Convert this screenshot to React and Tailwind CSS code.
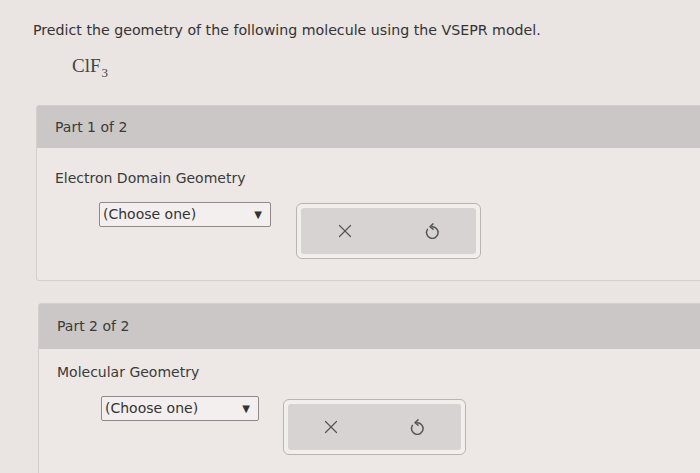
import { X } from "lucide-react";

function UndoIcon() {
  return (
    <svg width="17" height="19" viewBox="0 0 16 18" fill="none" stroke="#555" strokeWidth="1.4" strokeLinecap="round" strokeLinejoin="round">
      <path d="M7.5 4.5 A5.5 5.5 0 1 1 3.2 7" />
      <path d="M8.5 1.8 L5.6 4.5 L8.5 6.8" />
    </svg>
  );
}

function ChooseSelect({ width }) {
  return (
    <div
      className="h-[25px] border border-[#8f8a89] rounded-[2px] bg-[#f3efee] flex items-center justify-between pl-[3px] pr-[8px]"
      style={{ width }}
    >
      <span className="text-[14px] text-[#333]">(Choose one)</span>
      <span className="text-[10px] text-[#333]">▼</span>
    </div>
  );
}

function ButtonGroup({ width }) {
  return (
    <div
      className="h-[56px] border-[1.5px] border-[#b9b4b3] rounded-[6px] bg-[#f2eeec] p-[4px]"
      style={{ width }}
    >
      <div className="h-full rounded-[3px] bg-[#d7d3d2] grid grid-cols-2 items-center">
        <div className="flex justify-center">
          <X size={22} strokeWidth={1.3} color="#555" />
        </div>
        <div className="flex justify-center">
          <UndoIcon />
        </div>
      </div>
    </div>
  );
}

function Part({ title, label, headerH, bodyH, bodyPt, selW, btnW, selGap, btnMt, ml }) {
  return (
    <div className="border border-[#d4cfcd] rounded-[3px] bg-[#ede8e6] w-[700px]" style={{ marginLeft: ml }}>
      <div className="bg-[#cbc7c6] flex items-center pl-[18px] text-[14px] text-[#3a3a3a]" style={{ height: headerH }}>
        {title}
      </div>
      <div style={{ height: bodyH, paddingTop: bodyPt }}>
        <p className="pl-[18px] text-[14px] leading-[18px] text-[#3a3a3a]">{label}</p>
        <div className="flex items-start mt-[16px] ml-[62px]">
          <div className="mt-[-1px]">
            <ChooseSelect width={selW} />
          </div>
          <div style={{ marginLeft: selGap, marginTop: btnMt }}>
            <ButtonGroup width={btnW} />
          </div>
        </div>
      </div>
    </div>
  );
}

export default function App() {
  return (
    <div className="w-[700px] h-[473px] overflow-hidden bg-[#eae4e2] font-['DejaVu_Sans',sans-serif]">
      <p className="pl-[33px] pt-[21px] text-[14.2px] leading-[18px] text-[#333]">
        Predict the geometry of the following molecule using the VSEPR model.
      </p>
      <div className="pl-[72px] mt-[16px] h-[50px] font-['Liberation_Serif',serif] text-[19px] leading-[22px] text-[#444]">
        ClF<sub className="text-[13px] relative top-[5px] ml-[1px]">3</sub>
      </div>
      <Part
        title="Part 1 of 2"
        label="Electron Domain Geometry"
        headerH={42}
        bodyH={132}
        bodyPt={21}
        selW={172}
        btnW={185}
        selGap={25}
        btnMt={0}
        ml={36}
      />
      <div className="h-[22px]" />
      <Part
        title="Part 2 of 2"
        label="Molecular Geometry"
        headerH={45}
        bodyH={140}
        bodyPt={14}
        selW={158}
        btnW={183}
        selGap={24}
        btnMt={2}
        ml={38}
      />
    </div>
  );
}
